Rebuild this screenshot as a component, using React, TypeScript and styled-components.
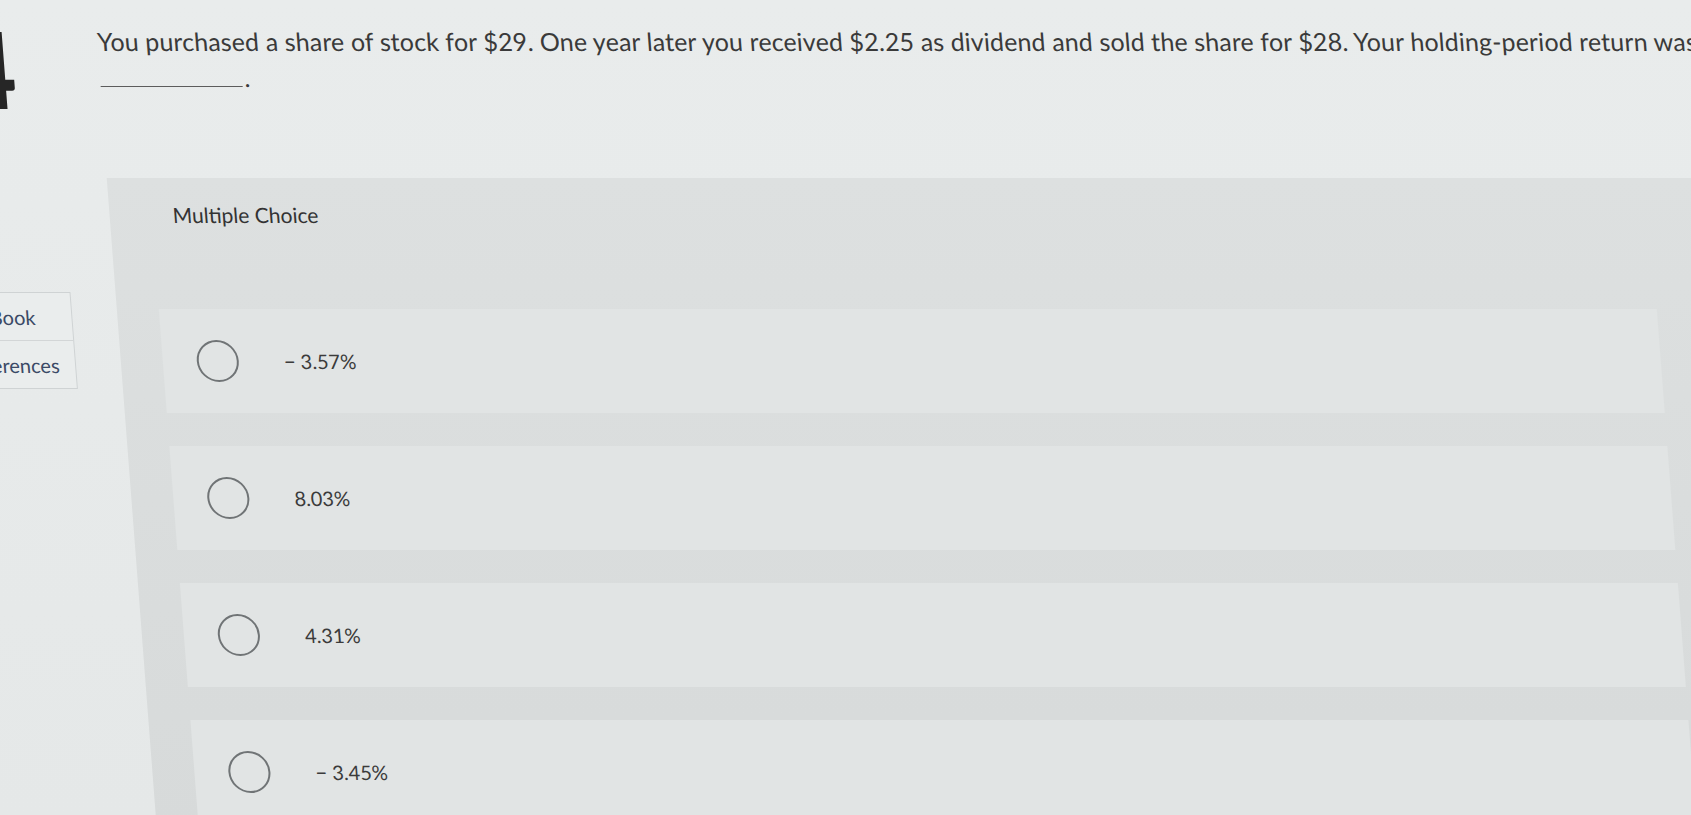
import React from "react";
import styled, { createGlobalStyle } from "styled-components";

const GlobalStyle = createGlobalStyle`
  html, body {
    margin: 0;
    padding: 0;
    height: 100%;
    overflow: hidden;
  }
  body {
    background: linear-gradient(180deg, #e9ecec 0%, #e5e8e8 100%);
    font-family: Lato, "Open Sans", "Liberation Sans", Arial, sans-serif;
    color: #383838;
  }
  #root {
    height: 100%;
  }
`;

const Page = styled.div`
  height: 815px;
  display: flex;
  flex-direction: column;
  transform: skewX(4.4deg);
  transform-origin: 0 0;
`;

const Header = styled.header`
  display: grid;
  grid-template-columns: 94px 1fr;
  height: 178px;
  flex: none;
`;

const NumberCell = styled.div`
  padding-top: 15px;
`;

const QuestionNumber = styled.span`
  display: block;
  margin-left: -51px;
  font-size: 106px;
  line-height: 1;
  font-weight: 900;
  color: #262626;
`;

const Prompt = styled.div`
  padding-top: 23px;
  font-size: 25px;
  letter-spacing: 0.12px;
  line-height: 36px;
  color: #3a3a3a;
  white-space: nowrap;
`;

const PromptLine = styled.div``;

const Blank = styled.span`
  display: inline-block;
  width: 142px;
  height: 1px;
  border-bottom: 1.5px solid #5c5c5c;
  margin-right: 2px;
`;

const Body = styled.div`
  flex: 1;
  min-height: 0;
  display: grid;
  grid-template-columns: 93px 1fr;
`;

const Sidebar = styled.aside`
  padding-top: 114px;
`;

const TabGroup = styled.nav`
  box-sizing: border-box;
  margin-left: -82px;
  width: 130px;
  border: 1px solid #cfd3d4;
  background: #eaeded;
  display: flex;
  flex-direction: column;
`;

const Tab = styled.div`
  height: 47px;
  display: flex;
  align-items: center;
  justify-content: center;
  font-size: 20px;
  color: #3b4a66;
  & + & {
    border-top: 1px solid #d3d6d7;
  }
`;

const Card = styled.section`
  background: linear-gradient(180deg, #dde0e0 0%, #d7dada 100%);
  padding-top: 24px;
  display: flex;
  flex-direction: column;
`;

const CardTitle = styled.h2`
  margin: 0;
  padding-left: 63px;
  font-size: 21px;
  line-height: 26px;
  font-weight: 400;
  color: #333333;
`;

const ChoiceList = styled.div`
  margin-top: 81px;
  padding: 0 58px 0 42px;
  display: flex;
  flex-direction: column;
  gap: 33px;
`;

const ChoiceRow = styled.label`
  height: 104px;
  display: flex;
  align-items: center;
  padding-left: 34px;
  background: #e1e4e4;
`;

const Radio = styled.span`
  box-sizing: border-box;
  width: 42px;
  height: 42px;
  border-radius: 50%;
  border: 2px solid #707476;
  flex: none;
`;

const ChoiceText = styled.span`
  margin-left: 45px;
  font-size: 20px;
  color: #3b3b3b;
`;

const choices = ["\u2212 3.57%", "8.03%", "4.31%", "\u2212 3.45%"];

export default function App() {
  return (
    <>
      <GlobalStyle />
      <Page>
        <Header>
          <NumberCell>
            <QuestionNumber>4</QuestionNumber>
          </NumberCell>
          <Prompt>
            <PromptLine>
              You purchased a share of stock for $29. One year later you received $2.25 as dividend and sold the share for $28. Your holding-period return was
            </PromptLine>
            <PromptLine>
              <Blank />.
            </PromptLine>
          </Prompt>
        </Header>
        <Body>
          <Sidebar>
            <TabGroup>
              <Tab>eBook</Tab>
              <Tab>References</Tab>
            </TabGroup>
          </Sidebar>
          <Card>
            <CardTitle>Multiple Choice</CardTitle>
            <ChoiceList>
              {choices.map((c) => (
                <ChoiceRow key={c}>
                  <Radio />
                  <ChoiceText>{c}</ChoiceText>
                </ChoiceRow>
              ))}
            </ChoiceList>
          </Card>
        </Body>
      </Page>
    </>
  );
}
